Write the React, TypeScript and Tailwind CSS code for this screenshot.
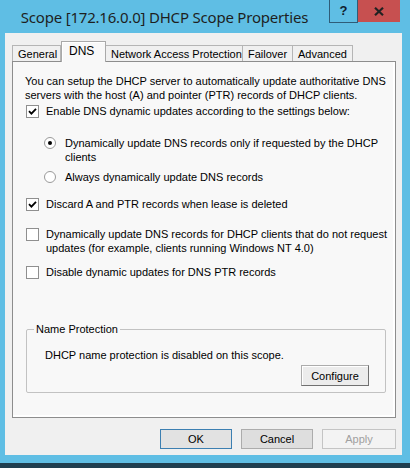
import React from 'react';

const ui = { fontFamily: '"Liberation Sans", Arial, sans-serif' };

function CheckBox({ checked }: { checked?: boolean }) {
    return (
        <span className="w-[13px] h-[13px] shrink-0 border border-[#8f8f8f] bg-white flex items-center justify-center">
            {checked && (
                <svg width="9" height="9" viewBox="0 0 9 9">
                    <path d="M1 4.2 L3.4 6.6 L8 1.8" fill="none" stroke="#000" strokeWidth="1.8" />
                </svg>
            )}
        </span>
    );
}

function Radio({ checked }: { checked?: boolean }) {
    return (
        <span className="w-[12px] h-[12px] shrink-0 rounded-full border border-[#9a9a9a] bg-white flex items-center justify-center">
            {checked && <span className="w-[4px] h-[4px] rounded-full bg-black" />}
        </span>
    );
}

function CheckRow({ checked, children, className }: { checked?: boolean; children: React.ReactNode; className?: string }) {
    return (
        <div className={`flex items-start gap-[7px] ml-[13px] ${className ?? ''}`}>
            <span className="pt-[1px]"><CheckBox checked={checked} /></span>
            <span>{children}</span>
        </div>
    );
}

function RadioRow({ checked, children, className }: { checked?: boolean; children: React.ReactNode; className?: string }) {
    return (
        <div className={`flex items-start gap-[9px] ml-[31px] ${className ?? ''}`}>
            <span className="pt-[1px]"><Radio checked={checked} /></span>
            <span>{children}</span>
        </div>
    );
}

const tabs = ['General', 'DNS', 'Network Access Protection', 'Failover', 'Advanced'];
const tabWidths = ['w-[49px]', 'w-[45px]', 'w-[137px]', 'w-[50px]', 'w-[60px]'];

export default function App() {
    return (
        <div className="w-[410px] h-[468px] bg-[#5fbee4] flex flex-col text-[11px] text-black" style={ui}>
            {/* title bar */}
            <div className="h-[33px] shrink-0 flex items-start">
                <div
                    className="flex-1 text-center whitespace-nowrap pt-[6px] text-[15px] leading-[22px] tracking-[-0.2px] text-[#1e1e1e]"
                    style={{ fontFamily: '"Noto Sans", "Open Sans", sans-serif' }}
                >
                    Scope [172.16.0.0] DHCP Scope Properties
                </div>
                <div className="flex mr-[10px]">
                    <div className="w-[29px] h-[23px] border border-t-0 border-[#2f5d78] flex items-center justify-center text-[13px] font-bold text-[#102030]">
                        ?
                    </div>
                    <div className="w-[42px] h-[22px] bg-[#c75050] flex items-center justify-center">
                        <svg width="10" height="9" viewBox="0 0 10 9">
                            <path d="M1 0.8 L9 8.2 M9 0.8 L1 8.2" stroke="#222" strokeWidth="2.2" />
                        </svg>
                    </div>
                </div>
            </div>

            {/* client area */}
            <div className="ml-[5px] mr-[8px] h-[422px] bg-[#f0f0f0] flex flex-col px-[7px]">
                {/* tabs */}
                <div className="flex items-end h-[28px] whitespace-nowrap">
                    {tabs.map((t, i) =>
                        t === 'DNS' ? (
                            <div
                                key={t}
                                className={`${tabWidths[i]} h-[21px] -mb-px relative z-10 border border-b-0 border-[#a9a9a9] bg-[#f8f8f8] shadow-[inset_1px_1px_0_#ffffff] pl-[7px] pt-[2px] leading-[14px] text-[12px]`}
                            >
                                {t}
                            </div>
                        ) : (
                            <div
                                key={t}
                                className={`${tabWidths[i]} h-[16px] border border-b-0 ${i === 0 ? '' : 'border-l-0'} border-[#b5b5b5] bg-[#f0f0f0] pl-[5px] pt-[1px] leading-[14px] text-[11px]`}
                            >
                                {t}
                            </div>
                        )
                    )}
                </div>

                {/* panel */}
                <div className="w-[384px] h-[357px] border border-[#8d8d8d] bg-[#f8f8f8] shadow-[inset_-2px_-2px_0_#ffffff] flex flex-col pt-[12px] leading-[14px]">
                    <p className="ml-[12px]">
                        You can setup the DHCP server to automatically update authoritative DNS
                        <br />
                        servers with the host (A) and pointer (PTR) records of DHCP clients.
                    </p>

                    <CheckRow checked className="mt-[2px]">
                        Enable DNS dynamic updates according to the settings below:
                    </CheckRow>

                    <RadioRow checked className="mt-[18px]">
                        Dynamically update DNS records only if requested by the DHCP
                        <br />
                        clients
                    </RadioRow>

                    <RadioRow className="mt-[6px]">Always dynamically update DNS records</RadioRow>

                    <CheckRow checked className="mt-[13px]">
                        Discard A and PTR records when lease is deleted
                    </CheckRow>

                    <CheckRow className="mt-[16px]">
                        Dynamically update DNS records for DHCP clients that do not request
                        <br />
                        updates (for example, clients running Windows NT 4.0)
                    </CheckRow>

                    <CheckRow className="mt-[10px]">Disable dynamic updates for DNS PTR records</CheckRow>

                    <fieldset className="ml-[13px] mt-[43px] w-[360px] h-[71px] border border-[#c2c2c2] rounded-[2px] px-[18px]">
                        <legend className="ml-[-11px] px-[2px]">Name Protection</legend>
                        <div className="mt-[12px]">DHCP name protection is disabled on this scope.</div>
                        <div className="flex justify-end mt-[3px] mr-[-2px]">
                            <button className="w-[68px] h-[21px] border border-[#acacac] border-r-[#707070] border-b-[#707070] bg-[#ececec] shadow-[inset_1px_1px_0_#ffffff]">
                                Configure
                            </button>
                        </div>
                    </fieldset>
                </div>

                {/* dialog buttons */}
                <div className="flex justify-end gap-[9px] mt-[11px] mr-[-1px]">
                    <button className="w-[72px] h-[20px] border border-[#3c7fb1] bg-[#e2e2e2]">OK</button>
                    <button className="w-[72px] h-[20px] border border-[#acacac] bg-[#dedede]">Cancel</button>
                    <button className="w-[74px] h-[20px] border border-[#c4c4c4] bg-[#f3f3f3] text-[#a0a0a0]">Apply</button>
                </div>
            </div>

            <div className="flex-1" />
            <div className="h-[5px] bg-[#1f3f50]" />
        </div>
    );
}
